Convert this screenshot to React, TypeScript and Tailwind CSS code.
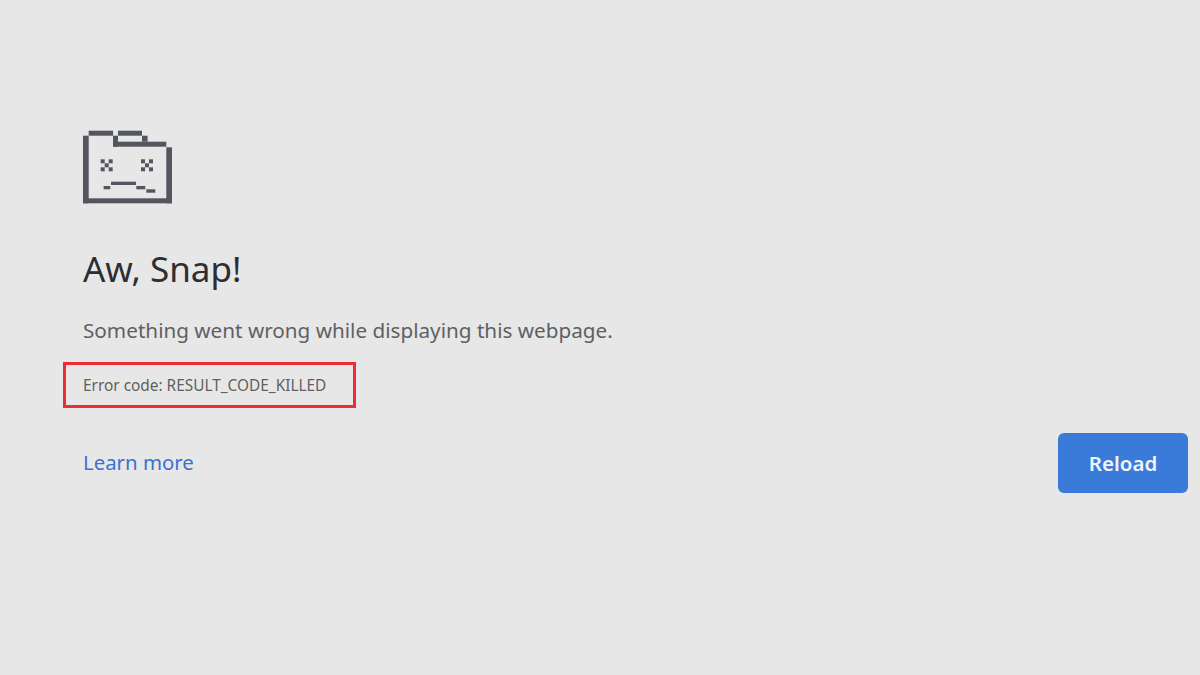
export default function App() {
  const rects: [number, number, number, number][] = [
    [5.7, 0.7, 24.4, 5], [35, 0.7, 24, 5], [0, 5.7, 5.7, 67.6], [0, 68.3, 89, 5],
    [83.3, 17.3, 5.7, 56], [30, 5.7, 5, 11], [30, 11.7, 53.3, 5], [59, 5.7, 5.6, 6],
    [20.6, 56, 6.7, 3.3], [28, 51.7, 25, 3.3], [53.3, 56, 9, 3.3], [63.3, 59.3, 9, 3.4],
  ];
  const eye = [[0, 0], [8, 0], [4, 4], [0, 8], [8, 8]];
  return (
    <div className="w-[1200px] h-[675px] bg-[#e7e7e7] overflow-hidden pl-[83px] pr-[12px] pt-[130px] font-['Noto_Sans','Open_Sans',sans-serif]">
      <svg width="89" height="74" viewBox="0 0 89 74" className="block" fill="#53565c">
        {rects.map((r, i) => <rect key={i} x={r[0]} y={r[1]} width={r[2]} height={r[3]} />)}
        {[17.7, 58].map((x) => eye.map(([dx, dy]) => (
          <rect key={`${x}-${dx}-${dy}`} x={x + dx} y={29.3 + dy} width="4" height="4" />
        )))}
      </svg>
      <h1 className="mt-[41px] text-[35px] leading-[48px] font-normal text-[#2c2e33]">Aw, Snap!</h1>
      <p className="mt-[21px] text-[20.7px] leading-[32px] text-[#5f6063]">Something went wrong while displaying this webpage.</p>
      <div className="-ml-[20px] mt-[16px] w-[293px] h-[46px] border-[3px] border-[#ee2c33] pl-[17px] pt-[1px] flex items-center text-[15.4px] text-[#5f5f62]">
        Error code: RESULT_CODE_KILLED
      </div>
      <div className="mt-[25px] flex items-center justify-between">
        <a className="relative -top-[1px] text-[20.4px] text-[#3b72d1]">Learn more</a>
        <button className="w-[130px] h-[60px] rounded-[6px] bg-[#3a7bd9] text-[#f0f4fb] font-semibold text-[20.5px]">Reload</button>
      </div>
    </div>
  );
}
